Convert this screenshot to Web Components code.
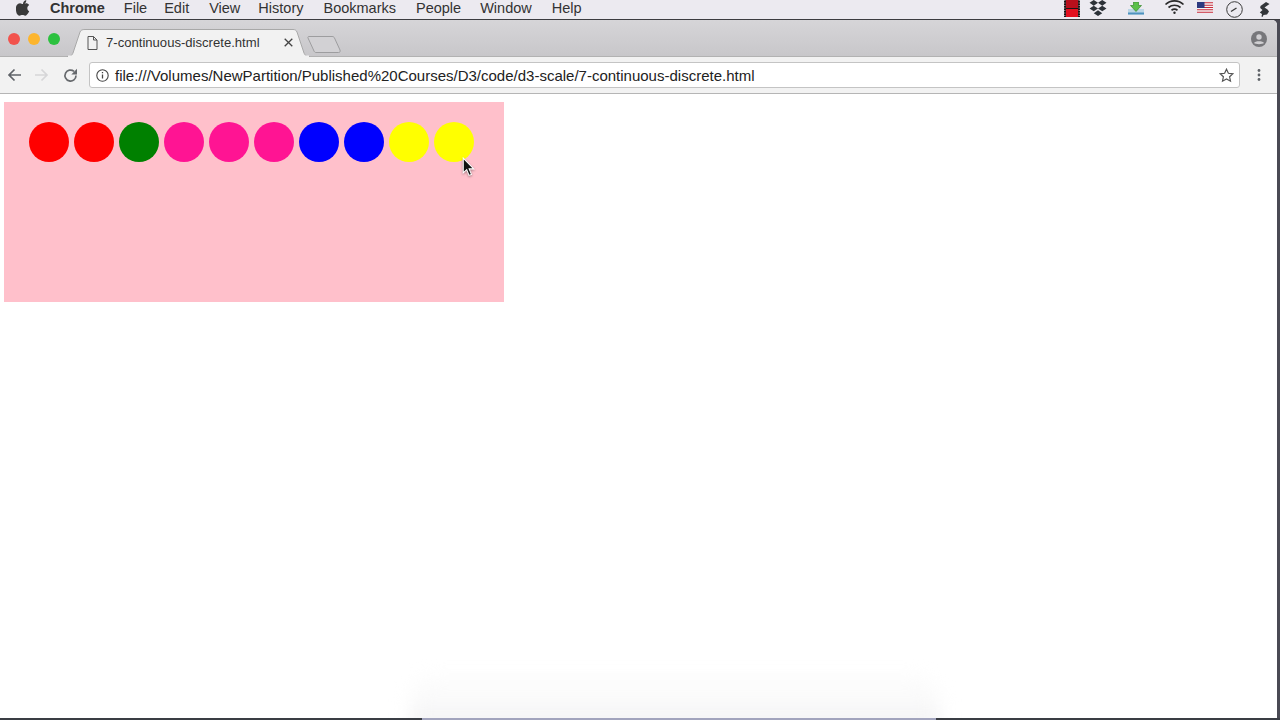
<!DOCTYPE html>
<html>
<head>
<meta charset="utf-8">
<title>7-continuous-discrete.html</title>
<style>
  html, body { margin: 0; height: 720px; overflow: hidden; background: #fff; }
  body { display: flex; flex-direction: column; font-family: "Liberation Sans", Arial, sans-serif; }
</style>
</head>
<body>
<mac-menubar></mac-menubar>
<browser-window>
  <browser-tabs></browser-tabs>
  <browser-toolbar></browser-toolbar>
  <page-view>
    <dot-chart></dot-chart>
  </page-view>
</browser-window>
<dock-edge></dock-edge>

<script>
class MacMenubar extends HTMLElement {
  constructor() {
    super();
    this.attachShadow({ mode: 'open' });
    this.shadowRoot.innerHTML = `
      <style>
        :host {
          display: flex;
          align-items: center;
          height: 20px;
          flex: none;
          background: #eceaf0;
          color: #333;
          font-size: 14.5px;
          padding: 0 0 0 16px;
          box-sizing: border-box;
          border-bottom: 1px solid #3c3c40;
        }
        .apple { width: 14px; height: 16px; margin-right: 20px; margin-top: -4px; }
        .menus { display: flex; gap: 19px; margin-top: -4px; }
        b { font-weight: 700; }
        .tray { margin-left: auto; align-self: flex-start; height: 19px; position: relative; width: 216px; }
        .tray svg { position: absolute; top: 0; }
      </style>
      <svg class="apple" viewBox="0 0 14 16"><path fill="#3a3a3a" d="M10.3 0.2c.1 1.1-.3 2-.9 2.700-.6.700-1.500 1.200-2.400 1.100-.1-1 .4-2 .9-2.600C8.500.7 9.500.2 10.300.2zM13.200 11.300c-.4.900-.6 1.300-1.100 2-.7 1.100-1.700 2.400-2.900 2.400-1.100 0-1.400-.7-2.800-.7s-1.800.7-2.900.7c-1.200 0-2.100-1.200-2.800-2.300C-.3 10.600-.5 7.100.7 5.300c.8-1.200 2.100-2 3.300-2 1.200 0 2 .8 3 .8s1.600-.8 3.100-.8c1.100 0 2.300.6 3.100 1.700-2.700 1.500-2.300 5.300 0 6.300z"/></svg>
      <div class="menus">
        <b>Chrome</b><span>File</span><span style="margin-left:-2px">Edit</span><span style="margin-left:1px">View</span><span style="margin-left:-1px">History</span><span style="margin-left:1px">Bookmarks</span><span style="margin-left:1px">People</span><span>Window</span><span style="margin-left:1px">Help</span>
      </div>
      <div class="tray">
        <svg style="left:0" width="16" height="17" viewBox="0 0 16 17">
          <rect width="16" height="17" fill="#1c1416"/><rect x="2" y="0" width="12" height="8" fill="#b80f1c"/><rect x="2" y="9" width="12" height="8" fill="#e2101f"/>
          <path d="M.8 0v17M15.200 0v17" stroke="#eee" stroke-width=".8" stroke-dasharray="1 1.500"/>
        </svg>
        <svg style="left:25px" width="18" height="16" viewBox="0 0 18 17" fill="#2d3238">
          <path d="M4.500 0L9 3 4.500 6 0 3zM13.500 0L18 3l-4.500 3L9 3zM4.500 6L9 9l-4.500 3L0 9zM13.500 6L18 9l-4.500 3L9 9zM9 11l4.500 3L9 17l-4.500-3z"/>
        </svg>
        <svg style="left:64px;top:2px" width="16" height="13" viewBox="0 0 16 13">
          <rect x="0" y="7" width="16" height="5.500" fill="#bcd6e6"/>
          <rect x="0" y="10.500" width="16" height="2" fill="#4f93c0"/>
          <path d="M5.500 0h5v3.500H13.500L8 9.500 2.500 3.500H5.500z" fill="#5cc04a" stroke="#3a8a30" stroke-width=".7"/>
        </svg>
        <svg style="left:100px" width="21" height="15" viewBox="0 0 20 15" fill="none" stroke="#2a2a2a" stroke-width="1.700">
          <path d="M1 4.500c5-4.800 13-4.800 18 0M4 7.500c3.500-3 8.500-3 12 0M7 10.300c1.800-1.300 4.200-1.300 6 0"/><circle cx="10" cy="12.800" r="1.200" fill="#2a2a2a" stroke="none"/>
        </svg>
        <svg style="left:133px;top:2px" width="16" height="11" viewBox="0 0 16 11">
          <rect width="16" height="11" fill="#f4f4f4"/>
          <path d="M0 .8h16M0 3.200h16M0 5.500h16M0 7.800h16M0 10.200h16" stroke="#c8283a" stroke-width="1.100"/>
          <rect width="7.500" height="6" fill="#2c3a80"/>
        </svg>
        <svg style="left:162px;top:1px" width="17" height="17" viewBox="0 0 17 17" fill="none" stroke="#3a3a3a">
          <circle cx="8.500" cy="8.500" r="7.800" stroke-width="1"/><path d="M5 10.500L10.500 7" stroke-width="1.400"/>
        </svg>
        <svg style="left:195px;top:2px" width="11" height="15" viewBox="0 0 11 15" fill="#33363a">
          <path d="M7 0l3.500 2L5.500 5.500 8.500 7.500 10 9.500 8 12.500 4.500 13 3.500 15 2.500 14.500 3 12 .8 10.500 3.500 8 1.200 6 1.500 4z"/>
        </svg>
      </div>
    `;
  }
}

class BrowserWindow extends HTMLElement {
  constructor() {
    super();
    this.attachShadow({ mode: 'open' });
    this.shadowRoot.innerHTML = `
      <style>
        :host {
          display: block;
          flex: 1;
          min-height: 0;
          background: #4a4a54;
          padding-right: 3px;
        }
        .frame {
          height: 100%;
          display: flex;
          flex-direction: column;
          border-top-right-radius: 5px;
          overflow: hidden;
          background: #fff;
        }
      </style>
      <div class="frame"><slot></slot></div>
    `;
  }
}

class BrowserTabs extends HTMLElement {
  constructor() {
    super();
    this.attachShadow({ mode: 'open' });
    this.shadowRoot.innerHTML = `
      <style>
        :host {
          display: flex;
          align-items: flex-end;
          height: 37px;
          flex: none;
          padding-left: 4px;
          background: linear-gradient(#d6d5d8, #c8c7ca);
          border-bottom: 1px solid #b2b2b2;
          box-sizing: border-box;
          position: relative;
          color: #333;
        }
        .lights { display: flex; gap: 8px; align-self: center; margin: 2px 0 0 4px; width: 60px; flex: none; }
        .lights i { width: 12px; height: 12px; border-radius: 50%; }
        .tab {
          display: flex;
          align-items: center;
          width: 230px;
          height: 28px;
          margin: 0 0 -1px 2px;
          padding: 0 7px 1px 17px;
          box-sizing: border-box;
          position: relative;
          font-size: 13.1px;
          z-index: 1;
        }
        .tab svg.shape { position: absolute; left: -3px; top: 0; z-index: -1; }
        .tab .name { margin-left: 8px; flex: 1; white-space: nowrap; }
        .new { margin-left: 7px; margin-bottom: 3px; flex: none; }
        .profile { position: absolute; right: 10px; top: 11px; }
      </style>
      <div class="lights">
        <i style="background:#f2534d"></i><i style="background:#fdb52d"></i><i style="background:#2cc13f"></i>
      </div>
      <div class="tab">
        <svg class="shape" width="243" height="28" viewBox="0 0 243 28">
          <path d="M0 28C4 28 5 26 6 24L13 3C14 1 15 .5 18 .5H226C228 .5 229 1 230 3L237 24C238 26 239 28 243 28Z" fill="#f2f2f2" stroke="#a8a8a8"/>
          <path d="M1 27.500H242" stroke="#f2f2f2" stroke-width="2"/>
        </svg>
        <svg width="11" height="14" viewBox="0 0 11 14" fill="none" stroke="#555"><path d="M1 .5h5.500L10 4v9.500H1zM6.500 .5V4H10"/></svg>
        <span class="name">7-continuous-discrete.html</span>
        <svg width="9" height="9" viewBox="0 0 9 9" stroke="#444" stroke-width="1.300"><path d="M.7.700l7.600 7.600M8.300.700L.7 8.300"/></svg>
      </div>
      <svg class="new" width="34" height="17" viewBox="0 0 34 17" fill="#d2d1d4" stroke="#9d9d9f"><path d="M2 .5H25C26.500 .5 27 1 27.500 2L33 14C33.500 15.500 33 16.500 31.500 16.500H9C8 16.500 7.500 16 7 15L1 2C.7 1 1 .5 2 .5z"/></svg>
      <svg class="profile" width="16" height="16" viewBox="0 0 16 16"><circle cx="8" cy="8" r="8" fill="#77777b"/><circle cx="8" cy="6" r="2.700" fill="#d0cfd2"/><path d="M3 12c1-2.500 9-2.500 10 0-1.500 1.500-8.500 1.500-10 0z" fill="#d0cfd2"/></svg>
    `;
  }
}

class BrowserToolbar extends HTMLElement {
  constructor() {
    super();
    this.attachShadow({ mode: 'open' });
    this.shadowRoot.innerHTML = `
      <style>
        :host {
          display: flex;
          align-items: center;
          height: 37px;
          flex: none;
          background: #f2f2f2;
          border-bottom: 1px solid #b5b5b5;
          box-sizing: border-box;
          padding: 0 16px 0 7px;
        }
        .nav { display: flex; align-items: center; gap: 14px; width: 82px; flex: none; }
        .omni {
          flex: 1;
          height: 26px;
          display: flex;
          align-items: center;
          background: #fff;
          border: 1px solid #c4c4c4;
          border-radius: 3px;
          box-sizing: border-box;
          padding: 0 5px 0 6px;
          font-size: 15px;
          color: #222;
        }
        .url { margin-left: 6px; flex: 1; white-space: nowrap; }
        .menu { margin-left: 17px; flex: none; }
      </style>
      <div class="nav">
        <svg width="14" height="14" viewBox="0 0 14 14" fill="none" stroke="#5f6368" stroke-width="1.700"><path d="M14 7H2M7.500 1.500L2 7l5.500 5.500"/></svg>
        <svg width="14" height="14" viewBox="0 0 14 14" fill="none" stroke="#d6d6d8" stroke-width="1.700"><path d="M0 7h12M6.500 1.500L12 7l-5.500 5.500"/></svg>
        <svg width="15" height="15" viewBox="0 0 15 15" fill="none"><path d="M13 7.500A5.500 5.500 0 1 1 11 3.300" stroke="#66696d" stroke-width="1.700"/><path d="M14 .8V6.500H8.300z" fill="#66696d"/></svg>
      </div>
      <div class="omni">
        <svg width="13" height="13" viewBox="0 0 13 13" fill="none" stroke="#444"><circle cx="6.500" cy="6.500" r="5.700" stroke-width="1.100"/><path d="M6.500 5.500v4M6.500 3v1.300" stroke-width="1.300"/></svg>
        <span class="url">file:///Volumes/NewPartition/Published%20Courses/D3/code/d3-scale/7-continuous-discrete.html</span>
        <svg width="15" height="15" viewBox="0 0 15 15" fill="none" stroke="#555" stroke-width="1.200"><path d="M7.500 1.200l1.900 4.100 4.500.5-3.300 3 .9 4.400-4-2.200-4 2.200.9-4.400-3.300-3 4.500-.5z"/></svg>
      </div>
      <svg class="menu" width="4" height="14" viewBox="0 0 4 14" fill="#5f6368"><circle cx="2" cy="2.500" r="1.400"/><circle cx="2" cy="7" r="1.400"/><circle cx="2" cy="11.500" r="1.400"/></svg>
    `;
  }
}

class PageView extends HTMLElement {
  constructor() {
    super();
    this.attachShadow({ mode: 'open' });
    this.shadowRoot.innerHTML = `
      <style>
        :host { display: block; flex: 1; background: #fff; padding: 8px 4px 0; min-height: 0; }
      </style>
      <slot></slot>
    `;
  }
}

class DotChart extends HTMLElement {
  constructor() {
    super();
    this.attachShadow({ mode: 'open' });
    const colors = ['red', 'red', 'green', 'deeppink', 'deeppink', 'deeppink', 'blue', 'blue', 'yellow', 'yellow'];
    this.shadowRoot.innerHTML = `
      <style>
        :host {
          display: flex;
          gap: 5px;
          align-items: flex-start;
          width: 500px;
          height: 200px;
          box-sizing: border-box;
          padding: 20px 0 0 25px;
          background: #ffc0cb;
          position: relative;
        }
        i { width: 40px; height: 40px; border-radius: 50%; flex: none; }
        .cursor { position: absolute; left: 458px; top: 55px; filter: drop-shadow(0 1px 1px rgba(0,0,0,.35)); }
      </style>
      ${colors.map(c => `<i style="background:${c}"></i>`).join('')}
      <svg class="cursor" width="13" height="20" viewBox="0 0 12 19"><path d="M1 1v14l3.300-3 2.200 5.500 2.300-1-2.200-5.200H11z" fill="#111" stroke="#fff" stroke-width="1"/></svg>
    `;
  }
}

class DockEdge extends HTMLElement {
  constructor() {
    super();
    this.attachShadow({ mode: 'open' });
    this.shadowRoot.innerHTML = `
      <style>
        :host { display: block; height: 2px; flex: none; background: #3a3d44; position: relative; }
        .bar { position: absolute; left: 422px; width: 514px; top: 0; height: 2px; background: #a2a4bd; }
        .clip { position: absolute; left: 360px; width: 640px; bottom: 2px; height: 60px; overflow: hidden; }
        .glow {
          position: absolute; left: 50px; width: 530px; bottom: -8px; height: 50px;
          background: linear-gradient(#fcfcfc, #fafafa 60%, #eeeef0);
          border-radius: 24px 24px 0 0;
          filter: blur(9px);
        }
      </style>
      <div class="clip"><div class="glow"></div></div>
      <div class="bar"></div>
    `;
  }
}

customElements.define('mac-menubar', MacMenubar);
customElements.define('browser-window', BrowserWindow);
customElements.define('browser-tabs', BrowserTabs);
customElements.define('browser-toolbar', BrowserToolbar);
customElements.define('page-view', PageView);
customElements.define('dot-chart', DotChart);
customElements.define('dock-edge', DockEdge);
</script>
</body>
</html>
